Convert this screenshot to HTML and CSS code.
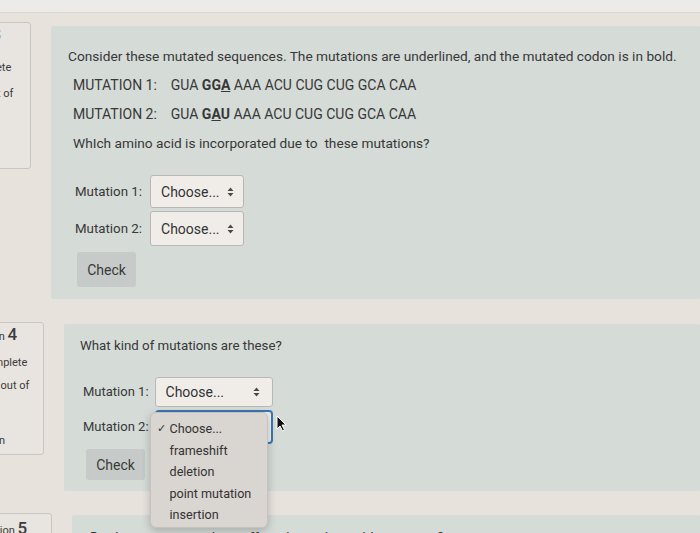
FILE: index.html
```html
<!DOCTYPE html>
<html lang="en">
<head>
<meta charset="utf-8">
<title>Quiz</title>
<link rel="stylesheet" href="styles.css">
</head>
<body>
<div class="topbar"></div>

<div class="que q3">
  <div class="info">
    <div class="qno-line">Question <span class="qno">3</span></div>
    <div class="state">Not complete</div>
    <div class="grade">Marked out of</div>
    <div class="value">1.00</div>
    <div class="flag">Flag question</div>
  </div>
  <div class="content">
    <p class="lead">Consider these mutated sequences. The mutations are underlined, and the mutated codon is in bold.</p>
    <p class="codon">MUTATION 1:&nbsp;&nbsp;&nbsp; GUA <b>GG<u>A</u></b> AAA ACU CUG CUG GCA CAA</p>
    <p class="codon">MUTATION 2:&nbsp;&nbsp;&nbsp; GUA <b>G<u>A</u>U</b> AAA ACU CUG CUG GCA CAA</p>
    <p class="codon ask">WhIch amino acid is incorporated due to &nbsp;these mutations?</p>
    <div class="answer">
      <div class="row r1">
        <span class="label">Mutation 1:</span>
        <span class="select"><span class="val">Choose...</span><svg class="arrows" width="7" height="10" viewBox="0 0 7 10"><path d="M3.5 0.5 L6.5 4 H0.5Z M0.5 6 H6.5 L3.5 9.5Z" fill="#4a4a4a"/></svg></span>
      </div>
      <div class="row r2">
        <span class="label">Mutation 2:</span>
        <span class="select"><span class="val">Choose...</span><svg class="arrows" width="7" height="10" viewBox="0 0 7 10"><path d="M3.5 0.5 L6.5 4 H0.5Z M0.5 6 H6.5 L3.5 9.5Z" fill="#4a4a4a"/></svg></span>
      </div>
      <button class="check">Check</button>
    </div>
  </div>
</div>

<div class="que q4">
  <div class="info">
    <div class="qno-line">Question <span class="qno">4</span></div>
    <div class="state">Not complete</div>
    <div class="grade">Marked out of</div>
    <div class="value">1.00</div>
    <div class="flag">Flag question</div>
  </div>
  <div class="content">
    <p class="lead">What kind of mutations are these?</p>
    <div class="answer">
      <div class="row r1">
        <span class="label">Mutation 1:</span>
        <span class="select"><span class="val">Choose...</span><svg class="arrows" width="7" height="10" viewBox="0 0 7 10"><path d="M3.5 0.5 L6.5 4 H0.5Z M0.5 6 H6.5 L3.5 9.5Z" fill="#4a4a4a"/></svg></span>
      </div>
      <div class="row r2">
        <span class="label">Mutation 2:</span>
        <span class="select focused">
          <span class="val">Choose...</span>
          <ul class="menu">
            <li class="sel"><span class="tick">✓</span>Choose...</li>
            <li>frameshift</li>
            <li>deletion</li>
            <li>point mutation</li>
            <li>insertion</li>
          </ul>
          <svg class="cursor" width="11" height="17" viewBox="0 0 11 17"><path d="M1 1 L1 14 L4 11 L6.5 16 L8.5 15 L6 10 L10 10 Z" fill="#111" stroke="#fff" stroke-width="1" stroke-linejoin="round"/></svg>
        </span>
      </div>
      <button class="check">Check</button>
    </div>
  </div>
</div>

<div class="que q5">
  <div class="info">
    <div class="qno-line">Question <span class="qno">5</span></div>
    <div class="state">Not complete</div>
  </div>
  <div class="content">
    <p class="lead">Do these two mutations affect the amino acid sequence?</p>
  </div>
</div>
</body>
</html>
```

FILE: styles.css
```css
html, body {
  margin: 0;
  padding: 0;
}
body {
  width: 700px;
  height: 533px;
  overflow: hidden;
  background: #e7e2dc;
  font-family: Roboto, "Liberation Sans", Arial, sans-serif;
  color: #383838;
}
.topbar {
  height: 12px;
  background: #ecebe8;
  border-bottom: 1px solid #dad6d1;
}
.que {
  display: flex;
  align-items: flex-start;
}
.info {
  flex: none;
  width: 112px;
  box-sizing: border-box;
  padding: 2px 0 6px 30px;
  border: 1px solid #c9c5bf;
  border-radius: 3px;
  background: #e8e4df;
  font-size: 11px;
  line-height: 16px;
  color: #3c3c3c;
  white-space: nowrap;
  overflow: hidden;
}
.qno-line {
  height: 18px;
  line-height: 18px;
}
.qno {
  font-size: 17px;
  font-weight: 500;
}
.state { margin-top: 12px; }
.grade { margin-top: 7px; }
.value { margin-top: 7px; }
.flag { margin-top: 16px; margin-left: -22px; }

.q3 { margin-top: 9px; }
.q3 .info { margin-left: -81px; height: 147px; padding-left: 25px; }
.q3 .state { margin-top: 17px; }
.q3 .grade { margin-top: 10px; }
.q4 { margin-top: 23px; }
.q4 .info { margin-left: -68px; height: 133px; padding-left: 28px; }
.q5 { margin-top: 22px; }
.q5 .info { margin-left: -60px; padding-top: 5px; }

.content {
  flex: 1;
  margin-left: 20px;
  background: #d5dbd7;
  border-radius: 2px;
  font-size: 14px;
  line-height: 20px;
}
.content p { margin: 0; white-space: nowrap; }
.q3 .content {
  margin-top: 4px;
  padding: 20px 16px 12px 17px;
}
.q3 .lead,
.q3 .ask { font-size: 13.7px; }
.q3 .codon {
  margin-top: 9px;
  padding-left: 5px;
}
.q3 .answer {
  margin-top: 22px;
  padding-left: 7px;
}
.q4 .content {
  margin-top: 2px;
  padding: 12px 16px 11px 16px;
}
.q4 .lead { font-size: 13.3px; }
.q4 .answer {
  margin-top: 21px;
  padding-left: 3px;
}
.q5 .content {
  margin-top: 2px;
  padding: 13px 16px 20px 18px;
}

.row {
  display: flex;
  align-items: center;
  gap: 8px;
}
.q4 .row { gap: 6px; }
.label { white-space: nowrap; font-size: 13.3px; }
.q4 .label { font-size: 13px; }
.select {
  position: relative;
  display: flex;
  align-items: center;
  justify-content: space-between;
  box-sizing: border-box;
  background: #f0ede9;
  border: 1px solid #b9b7b4;
  border-radius: 3px;
  color: #333;
}
.arrows { flex: none; }
.q3 .select {
  width: 94px;
  padding: 0 9px 0 10px;
}
.q3 .r1 .select { height: 33px; }
.q3 .r2 { margin-top: 3px; }
.q3 .r2 .select { height: 35px; }
.q4 .select {
  width: 118px;
  padding: 0 12px 0 10px;
}
.q4 .r1 .select { height: 30px; }
.q4 .r2 { margin-top: 3px; }
.q4 .r2 .select { height: 34px; }
.select.focused {
  border: 2px solid #3b76b4;
  border-radius: 4px;
}
.check {
  display: block;
  font: inherit;
  color: #3a3a3a;
  background: #c6cac8;
  border: none;
  border-radius: 3px;
  padding: 0;
  width: 59px;
}
.q3 .check { height: 35px; margin-top: 6px; margin-left: 2px; }
.q4 .check { height: 31px; margin-top: 5px; margin-left: 3px; }

.menu {
  position: absolute;
  left: -7px;
  top: 0px;
  width: 118px;
  margin: 0;
  padding: 5px 0 3px 0;
  list-style: none;
  background: #d9d5d0;
  border: 1px solid #c6c2bd;
  border-radius: 6px;
  box-shadow: 0 3px 10px rgba(0, 0, 0, 0.22);
  font-size: 12.6px;
  line-height: 21.5px;
  color: #333;
  box-sizing: border-box;
  height: 116px;
}
.menu li {
  position: relative;
  padding-left: 19px;
  white-space: nowrap;
}
.menu .tick {
  position: absolute;
  left: 6px;
  font-size: 11px;
}
.cursor {
  position: absolute;
  left: 119px;
  top: 3px;
}
```
